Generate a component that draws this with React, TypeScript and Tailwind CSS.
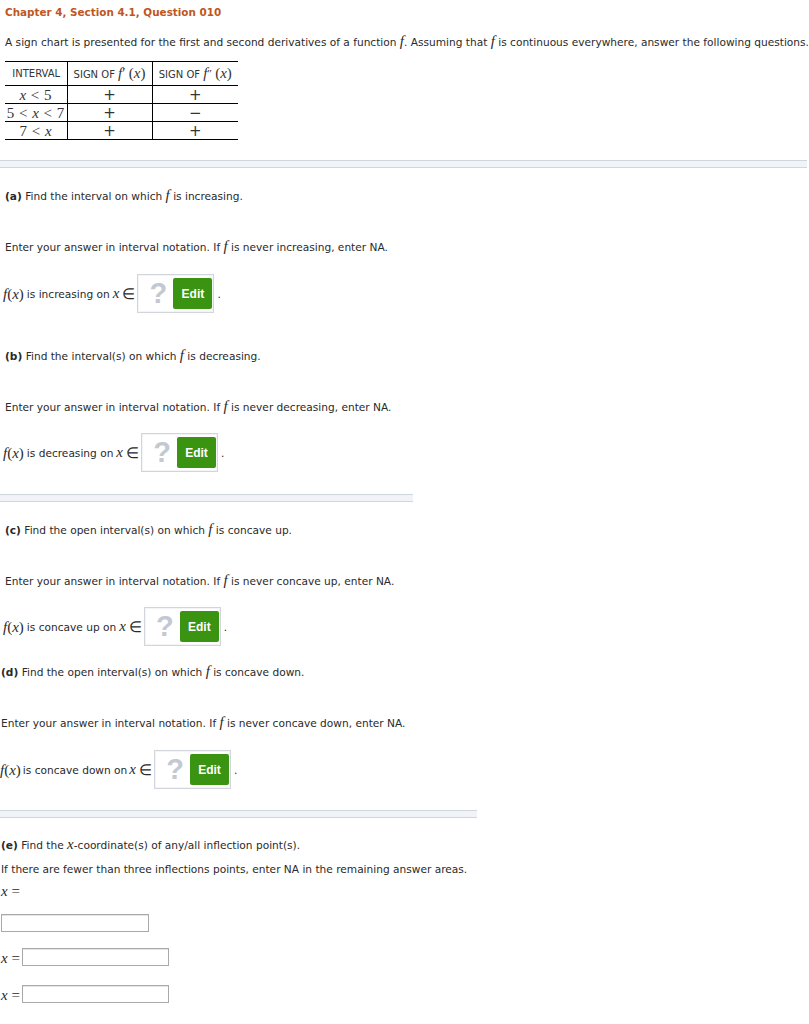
import React from "react";

const F = ({ children }: { children: React.ReactNode }) => (
  <span className="font-['Liberation_Serif',serif] italic text-[15px]">{children}</span>
);

const Fx = () => (
  <span className="font-['Liberation_Serif',serif] text-[15px]">
    <i>f</i>(<i>x</i>)
  </span>
);

const X = () => <span className="font-['Liberation_Serif',serif] italic text-[15px]">x</span>;

function Sep({ w }: { w: string }) {
  return <div className={`h-[8px] border-t border-b border-[#cfd6dd] bg-[#f0f4f8] ${w}`} />;
}

function Answer({ label, mt, pl, gap }: { label: string; mt: string; pl: string; gap: string }) {
  return (
    <div className={`flex items-center h-[39px] ${mt} ${pl}`}>
      <Fx />
      <span className={gap}>{label} on</span>
      <span className={gap}><X /></span>
      <span className="ml-[3px] font-['Liberation_Serif',serif] text-[15px]">∈</span>
      <div className="ml-[2px] h-[39px] w-[77px] border border-[#d2d6dc] shadow-[inset_0_0_0_1px_#f3f4f6] flex items-center pl-[10px]">
        <span className="font-['Liberation_Sans',sans-serif] font-bold text-[29px] text-[#c3c9d2] leading-none w-[20px] text-center">?</span>
        <div className="ml-[5px] h-[31px] w-[39px] bg-[#3a9412] rounded-[2px] flex items-center justify-center text-white font-bold font-['Liberation_Sans',sans-serif] text-[12px]">
          Edit
        </div>
      </div>
      <span className="ml-[3px]">.</span>
    </div>
  );
}

export default function App() {
  return (
    <div className="bg-white w-[809px] h-[1024px] overflow-hidden font-['DejaVu_Sans',sans-serif] text-[10.6px] text-[#2a2a2a] leading-[14px]">
      <div className="mt-[4px] pl-[5px] h-[16px] leading-[16px] font-bold text-[10.4px] text-[#c0561e]">
        Chapter 4, Section 4.1, Question 010
      </div>
      <div className="mt-[14px] pl-[5px] h-[14px] whitespace-nowrap">
        A sign chart is presented for the first and second derivatives of a function <F>f</F>. Assuming that <F>f</F> is continuous everywhere, answer the following questions.
      </div>

      <table className="mt-[13px] ml-[5px] border-collapse text-[#333]">
        <tbody>
          <tr className="h-[24px] border-t border-b border-black">
            <td className="w-[62px] text-center text-[10px] pl-[1px]">INTERVAL</td>
            <td className="w-[85px] text-center text-[10px] border-l border-r border-black whitespace-nowrap">
              SIGN OF <F>f</F><span className="font-['Liberation_Serif',serif] text-[15px]">′</span> <span className="font-['Liberation_Serif',serif] text-[15px]">(<i>x</i>)</span>
            </td>
            <td className="w-[86px] text-center text-[10px] whitespace-nowrap">
              SIGN OF <F>f</F><span className="font-['Liberation_Serif',serif] text-[11px] align-top">″</span> <span className="font-['Liberation_Serif',serif] text-[15px]">(<i>x</i>)</span>
            </td>
          </tr>
          {[
            [<><i>x</i> &lt; 5</>, "+", "+"],
            [<>5 &lt; <i>x</i> &lt; 7</>, "+", "−"],
            [<>7 &lt; <i>x</i></>, "+", "+"],
          ].map((r, i) => (
            <tr key={i} className="h-[18px] border-b border-black">
              <td className="text-center font-['Liberation_Serif',serif] text-[15px] leading-[16px] whitespace-nowrap tracking-[0.5px]">{r[0]}</td>
              <td className="text-center border-l border-r border-black text-[15px] leading-[16px]">{r[1]}</td>
              <td className="text-center text-[15px] leading-[16px]">{r[2]}</td>
            </tr>
          ))}
        </tbody>
      </table>

      <div className="mt-[20px]"><Sep w="w-[807px]" /></div>

      <div className="mt-[20px] pl-[5px] h-[14px]">
        <b>(a)</b> Find the interval on which <F>f</F> is increasing.
      </div>
      <div className="mt-[37px] pl-[5px] h-[14px]">
        Enter your answer in interval notation. If <F>f</F> is never increasing, enter NA.
      </div>
      <Answer label="is increasing" mt="mt-[21px]" pl="pl-[3px]" gap="ml-[3px]" />

      <div className="mt-[35px] pl-[5px] h-[14px]">
        <b>(b)</b> Find the interval(s) on which <F>f</F> is decreasing.
      </div>
      <div className="mt-[37px] pl-[5px] h-[14px]">
        Enter your answer in interval notation. If <F>f</F> is never decreasing, enter NA.
      </div>
      <Answer label="is decreasing" mt="mt-[20px]" pl="pl-[3px]" gap="ml-[3px]" />

      <div className="mt-[22px]"><Sep w="w-[413px]" /></div>

      <div className="mt-[20px] pl-[5px] h-[14px]">
        <b>(c)</b> Find the open interval(s) on which <F>f</F> is concave up.
      </div>
      <div className="mt-[37px] pl-[5px] h-[14px]">
        Enter your answer in interval notation. If <F>f</F> is never concave up, enter NA.
      </div>
      <Answer label="is concave up" mt="mt-[20px]" pl="pl-[3px]" gap="ml-[3px]" />

      <div className="mt-[18px] pl-[1px] h-[14px]">
        <b>(d)</b> Find the open interval(s) on which <F>f</F> is concave down.
      </div>
      <div className="mt-[37px] pl-[1px] h-[14px]">
        Enter your answer in interval notation. If <F>f</F> is never concave down, enter NA.
      </div>
      <Answer label="is concave down" mt="mt-[21px]" pl="pl-0" gap="ml-[2px]" />

      <div className="mt-[21px]"><Sep w="w-[477px]" /></div>

      <div className="mt-[19px] pl-[1px] h-[14px]">
        <b>(e)</b> Find the <X />-coordinate(s) of any/all inflection point(s).
      </div>
      <div className="mt-[11px] pl-[1px] h-[14px]">
        If there are fewer than three inflections points, enter NA in the remaining answer areas.
      </div>
      <div className="mt-[8px] pl-[1px] h-[14px] font-['Liberation_Serif',serif] text-[15px]">
        <i>x</i> =
      </div>
      <div className="mt-[16px] pl-[1px]">
        <div className="h-[18px] w-[148px] border border-[#a9a9a9] shadow-[inset_0_1px_0_#e5e5e5]" />
      </div>
      <div className="mt-[16px] flex items-end h-[18px] pl-[1px]">
        <span className="font-['Liberation_Serif',serif] text-[15px] leading-[16px] w-[21px]"><i>x</i> =</span>
        <div className="h-[18px] w-[147px] border border-[#a9a9a9] shadow-[inset_0_1px_0_#e5e5e5]" />
      </div>
      <div className="mt-[19px] flex items-end h-[18px] pl-[1px]">
        <span className="font-['Liberation_Serif',serif] text-[15px] leading-[16px] w-[21px]"><i>x</i> =</span>
        <div className="h-[18px] w-[147px] border border-[#a9a9a9] shadow-[inset_0_1px_0_#e5e5e5]" />
      </div>
    </div>
  );
}
